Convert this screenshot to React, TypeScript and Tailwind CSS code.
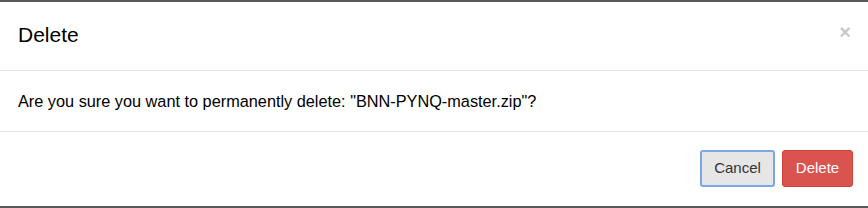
export default function App() {
  return (
    <div className="w-[868px] h-[208px] bg-white border-t-2 border-b-2 border-[#595959] flex flex-col font-['Liberation_Sans',Arial,sans-serif] text-[#000]">
      {/* header */}
      <div className="h-[69px] border-b border-[#e5e5e5] flex items-center justify-between pl-[18px] pr-[17px]">
        <h4 className="text-[21px] leading-none -mt-[3px]">Delete</h4>
        <button className="text-[#c8c8c8] text-[20px] font-bold leading-none -mt-[8px]">×</button>
      </div>

      {/* body */}
      <div className="h-[61px] border-b border-[#e5e5e5] flex items-center pl-[18px] text-[16.3px]">
        Are you sure you want to permanently delete: "BNN-PYNQ-master.zip"?
      </div>

      {/* footer */}
      <div className="flex-1 flex items-center justify-end gap-[7px] pr-[15px] pb-[2px]">
        <button className="w-[75px] h-[37px] rounded-[3px] bg-[#e6e6e6] border-2 border-[#7aa7e6] text-[#333] text-[15px]">
          Cancel
        </button>
        <button className="w-[71px] h-[37px] rounded-[3px] bg-[#d9534f] border border-[#d43f3a] text-white text-[15px]">
          Delete
        </button>
      </div>
    </div>
  );
}
